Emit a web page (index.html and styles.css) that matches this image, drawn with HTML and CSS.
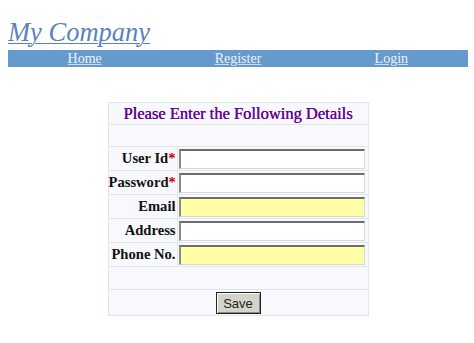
FILE: index.html
```html
<!DOCTYPE html>
<html>
<head>
<meta charset="utf-8">
<link rel="stylesheet" href="styles.css">
</head>
<body>
<div class="page">
  <div class="brand"><a class="brand-link" href="#">My Company</a></div>
  <nav class="nav">
    <a class="nav-link" href="#">Home</a>
    <a class="nav-link" href="#">Register</a>
    <a class="nav-link" href="#">Login</a>
  </nav>
  <div class="form-wrap">
    <table class="form">
      <colgroup><col class="c-label"><col class="c-field"></colgroup>
      <tr class="r-title"><td class="title" colspan="2">Please Enter the Following Details</td></tr>
      <tr class="r-empty"><td colspan="2"></td></tr>
      <tr class="r-field"><td class="label">User Id<span class="req">*</span></td><td class="field"><input class="input" type="text"></td></tr>
      <tr class="r-field"><td class="label">Password<span class="req">*</span></td><td class="field"><input class="input" type="password"></td></tr>
      <tr class="r-field"><td class="label">Email</td><td class="field"><input class="input yellow" type="text"></td></tr>
      <tr class="r-field"><td class="label">Address</td><td class="field"><input class="input" type="text"></td></tr>
      <tr class="r-field"><td class="label">Phone No.</td><td class="field"><input class="input yellow" type="text"></td></tr>
      <tr class="r-empty2"><td colspan="2"></td></tr>
      <tr class="r-btn"><td class="btn-cell" colspan="2"><button class="save" type="button">Save</button></td></tr>
    </table>
  </div>
</div>
</body>
</html>
```
FILE: styles.css
```css
html, body { margin: 0; padding: 0; background: #ffffff; }
body { font-family: "Liberation Serif", "Times New Roman", serif; }
.page { width: 460px; padding: 0 8px; }
.brand { height: 50px; box-sizing: border-box; padding-top: 17px; line-height: 30px; }
.brand-link { font-size: 26.5px; font-style: italic; color: #5a82bc; text-decoration: underline; text-decoration-thickness: 1px; text-underline-offset: 2px; }
.nav { display: grid; grid-template-columns: 1fr 1fr 1fr; height: 17px; background: #6699cc; line-height: 17px; text-align: center; }
.nav-link { font-size: 14px; color: #eef3fa; text-decoration: underline; text-decoration-color: #c9dcef; }
.form-wrap { display: flex; justify-content: center; padding-top: 35px; }
.form { border-collapse: collapse; table-layout: fixed; width: 260px; background: #f8f9fc; border: 1px solid #dfe4ec; }
.c-label { width: 69px; }
.c-field { width: 191px; }
.form td { border: 1px solid #e1e5ec; padding: 0; }
.title { height: 21px; text-align: center; color: #660099; font-size: 16.5px; line-height: 20px; text-shadow: 0.3px 0 0 #660099; }
.r-empty td { height: 21px; }
.r-field td { height: 23px; }
.label { text-align: right; font-weight: bold; font-size: 14.6px; color: #111; padding-right: 1px !important; white-space: nowrap; }
.req { color: #cc0000; }
.field { padding-left: 1px !important; }
.input { display: block; box-sizing: border-box; width: 186px; height: 20px; margin: 0; padding: 0 2px; background: #ffffff; border-style: solid; border-width: 2px 1px 1px 2px; border-color: #6e6e6e #d8d8d8 #d8d8d8 #8a8a8a; font-size: 13px; }
.input.yellow { background: #ffffa6; }
.r-empty2 td { height: 22px; }
.btn-cell { height: 25px; text-align: center; }
.save { font-family: "Liberation Sans", Arial, sans-serif; font-size: 13px; color: #222; background: #d6d3cc; border: 1px solid #222; box-shadow: inset 1px 1px 0 #fff, inset -1px -1px 0 #888; width: 45px; height: 22px; padding: 0; margin-top: 1px; }
```
